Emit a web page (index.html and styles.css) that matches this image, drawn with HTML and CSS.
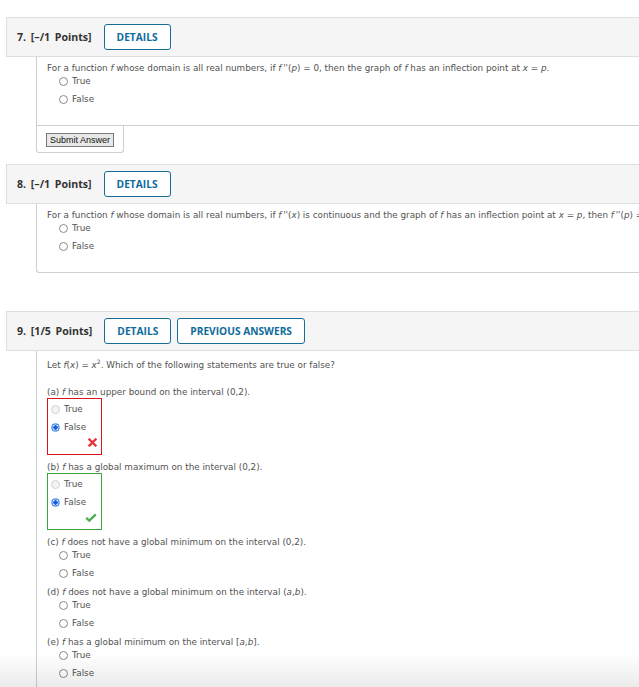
FILE: index.html
```html
<!DOCTYPE html>
<html lang="en">
<head>
    <meta charset="UTF-8">
    <meta name="viewport" content="width=device-width, initial-scale=1.0">
    <title>Assignment</title>
    <link rel="stylesheet" href="styles.css">
</head>
<body>
    <div class="page">
        <!-- question 7 -->
        <section class="question">
            <div class="q-head">
                <span class="q-title">7. [&ndash;/1 Points]</span>
                <button class="q-btn">DETAILS</button>
            </div>
            <div class="q-body">
                <div class="q-content">
                    <p class="q-text">For a function <i>f</i> whose domain is all real numbers, if <i>f</i>&thinsp;''(<i>p</i>) = 0, then the graph of <i>f</i> has an inflection point at <i>x</i> = <i>p</i>.</p>
                    <label class="opt"><span class="radio"></span>True</label>
                    <label class="opt"><span class="radio"></span>False</label>
                </div>
                <div class="q-submit">
                    <button class="submit-btn">Submit Answer</button>
                </div>
            </div>
        </section>

        <!-- question 8 -->
        <section class="question q-spaced">
            <div class="q-head">
                <span class="q-title">8. [&ndash;/1 Points]</span>
                <button class="q-btn">DETAILS</button>
            </div>
            <div class="q-body">
                <div class="q-content q-closed">
                    <p class="q-text">For a function <i>f</i> whose domain is all real numbers, if <i>f</i>&thinsp;''(<i>x</i>) is continuous and the graph of <i>f</i> has an inflection point at <i>x</i> = <i>p</i>, then <i>f</i>&thinsp;''(<i>p</i>) = 0.</p>
                    <label class="opt"><span class="radio"></span>True</label>
                    <label class="opt"><span class="radio"></span>False</label>
                </div>
            </div>
        </section>

        <!-- question 9 -->
        <section class="question">
            <div class="q-head">
                <span class="q-title">9. [1/5 Points]</span>
                <button class="q-btn">DETAILS</button>
                <button class="q-btn">PREVIOUS ANSWERS</button>
            </div>
            <div class="q-body">
                <div class="q-content q-open">
                    <p class="q-text q-lead">Let <i>f</i>(<i>x</i>) = <i>x</i><sup>2</sup>. Which of the following statements are true or false?</p>

                    <p class="q-text part">(a) <i>f</i> has an upper bound on the interval (0,2).</p>
                    <div class="graded wrong">
                        <label class="opt"><span class="radio off"></span>True</label>
                        <label class="opt"><span class="radio on"></span>False</label>
                        <div class="mark">
                            <svg width="9" height="9" viewBox="0 0 9 9"><path d="M1.5 1.5 L7.5 7.5 M7.5 1.5 L1.5 7.5" stroke="#e8363f" stroke-width="2.4" stroke-linecap="square"/></svg>
                        </div>
                    </div>

                    <p class="q-text part">(b) <i>f</i> has a global maximum on the interval (0,2).</p>
                    <div class="graded right">
                        <label class="opt"><span class="radio off"></span>True</label>
                        <label class="opt"><span class="radio on"></span>False</label>
                        <div class="mark">
                            <svg width="12" height="9" viewBox="0 0 12 9"><path d="M1.2 4.8 L4.3 7.6 L10.8 1.4" fill="none" stroke="#4caf50" stroke-width="2.4"/></svg>
                        </div>
                    </div>

                    <p class="q-text part">(c) <i>f</i> does not have a global minimum on the interval (0,2).</p>
                    <label class="opt"><span class="radio"></span>True</label>
                    <label class="opt"><span class="radio"></span>False</label>

                    <p class="q-text part">(d) <i>f</i> does not have a global minimum on the interval (<i>a</i>,<i>b</i>).</p>
                    <label class="opt"><span class="radio"></span>True</label>
                    <label class="opt"><span class="radio"></span>False</label>

                    <p class="q-text part">(e) <i>f</i> has a global minimum on the interval [<i>a</i>,<i>b</i>].</p>
                    <label class="opt"><span class="radio"></span>True</label>
                    <label class="opt"><span class="radio"></span>False</label>
                </div>
            </div>
        </section>
    </div>
    <div class="fade"></div>
</body>
</html>
```

FILE: styles.css
```css
body {
    margin: 0;
    padding: 0;
    background: #fff;
    overflow: hidden;
    font-family: "DejaVu Sans", Verdana, sans-serif;
    color: #525252;
}

.page {
    padding: 17px 0 0 6px;
}

.question {
    margin-bottom: 11px;
}
.question.q-spaced {
    margin-bottom: 38px;
}

/* header bar */
.q-head {
    display: flex;
    align-items: center;
    gap: 6px;
    height: 38px;
    padding-left: 10px;
    background: #f5f5f5;
    border: 1px solid #dedede;
    border-right: none;
}
.q-title {
    font-family: "Open Sans", sans-serif;
    font-weight: 700;
    font-size: 10.6px;
    color: #333;
    margin-right: 6px;
    word-spacing: 2px;
}
.q-btn {
    font-family: "Open Sans", sans-serif;
    font-weight: 700;
    font-size: 10.2px;
    color: #0e6b9c;
    background: #fff;
    border: 1px solid #176c9a;
    border-radius: 3px;
    height: 26px;
    padding: 0 12px;
}

/* body */
.q-body {
    margin-left: 30px;
}
.q-content {
    border-left: 1px solid #cfcfcf;
    border-bottom: 1px solid #cfcfcf;
    padding: 5px 0 15px 10px;
    overflow: hidden;
}
.q-content.q-closed {
    border-bottom-left-radius: 3px;
}
.q-content.q-open {
    border-bottom: none;
    padding-top: 8px;
}
.q-text {
    margin: 0;
    font-size: 8.8px;
    line-height: 12px;
    white-space: nowrap;
}
.q-text sup {
    font-size: 6px;
    line-height: 0;
}
.q-lead {
    margin-bottom: 15px;
}
.part {
    margin-top: 6px;
}

.opt {
    display: flex;
    align-items: center;
    height: 14px;
    margin-bottom: 4px;
    padding-left: 12px;
    font-size: 8.8px;
}
.radio {
    width: 7px;
    height: 7px;
    border: 1px solid #8a8a8a;
    border-radius: 50%;
    background: #fff;
    margin-right: 4px;
}
.radio.off {
    border-color: #d2d2d2;
    background: #f4f4f4;
}
.radio.on {
    border-color: #5b9bea;
    background: radial-gradient(circle, #135fdc 0 2px, #e9f1fd 2.4px 2.8px, #4c8ee6 3.2px);
}

/* graded answer boxes */
.graded {
    width: 53px;
    height: 52px;
    padding-top: 3px;
    margin-bottom: 5px;
}
.graded .opt {
    padding-left: 3px;
}
.graded.wrong {
    border: 1px solid #d9141c;
}
.graded.right {
    border: 1px solid #3aa53f;
}
.mark {
    display: flex;
    justify-content: flex-end;
    padding-right: 4px;
}

/* submit */
.q-submit {
    width: fit-content;
    border: 1px solid #cfcfcf;
    border-top: none;
    border-radius: 0 0 3px 3px;
    padding: 7px 9px 5px 9px;
}
.submit-btn {
    display: block;
    height: 14px;
    padding: 0 3px;
    font-family: "Liberation Sans", Arial, sans-serif;
    font-size: 9px;
    color: #111;
    background: #e8e8e8;
    border: 1px solid #7a7a7a;
}

.fade {
    position: fixed;
    left: 0;
    right: 0;
    bottom: 0;
    height: 34px;
    background: linear-gradient(rgba(0, 0, 0, 0), rgba(0, 0, 0, 0.08));
    pointer-events: none;
}
```
